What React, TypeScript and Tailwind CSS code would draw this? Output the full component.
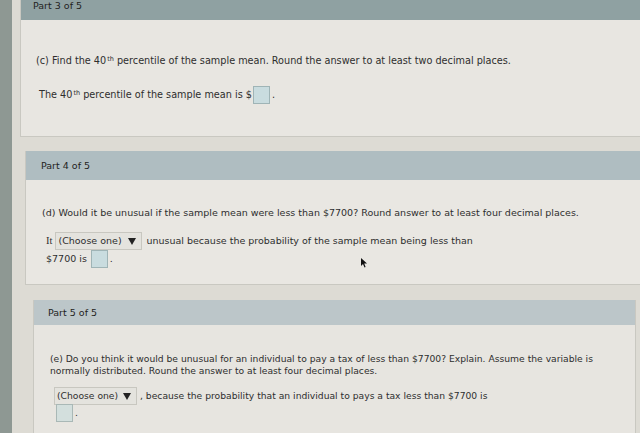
import React from 'react'

function AnswerBox({ className = '' }: { className?: string }) {
  return <span className={`inline-block h-[18px] w-[17px] border border-[#9fb4b6] bg-[#c9dcdf] align-middle ${className}`} />
}

function ChooseOne({ className = '' }: { className?: string }) {
  return (
    <span className={`inline-flex h-[18px] items-center justify-between border border-[#c8c7c0] bg-[#e4e3de] pl-[2px] pr-[5px] align-middle ${className}`}>
      <span>(Choose one)</span>
      <svg width="8" height="8" viewBox="0 0 8 8" className="shrink-0">
        <polygon points="0,1 8,1 4,8" fill="#222" />
      </svg>
    </span>
  )
}

function Th() {
  return <sup className="relative -top-[3px] ml-[1px] text-[6.5px]">th</sup>
}

export default function App() {
  return (
    <div className="relative flex h-[433px] w-[640px] overflow-hidden bg-[#dddbd4] font-['DejaVu_Sans','Liberation_Sans',sans-serif] leading-[12px] text-[#2e2e2e]">
      <div className="w-[12px] shrink-0 bg-[#8e9893]" />

      <div className="flex min-w-0 flex-1 flex-col">
        {/* Part 3 */}
        <div className="ml-[8px] flex flex-col border-l border-b border-[#c9c8c1]">
          <div className="flex h-[20px] items-start bg-[#8fa1a2] px-[12px] text-[9.5px] leading-[12px] text-[#1f2322]">Part 3 of 5</div>
          <div className="flex h-[116px] flex-col bg-[#e8e6e1] px-[15px] pt-[35px] text-[9.7px]">
            <p className="whitespace-nowrap">
              (c) Find the 40<Th /> percentile of the sample mean. Round the answer to at least two decimal places.
            </p>
            <p className="mt-[19px] flex h-[18px] items-center whitespace-nowrap pl-[3px]">
              <span>
                The 40<Th /> percentile of the sample mean is $
              </span>
              <AnswerBox className="ml-[1px]" />
              <span className="ml-[2px]">.</span>
            </p>
          </div>
        </div>

        {/* Part 4 */}
        <div className="ml-[13px] mt-[14px] flex flex-col border-l border-b border-[#c9c8c1]">
          <div className="flex h-[29px] items-center bg-[#afbdc1] px-[15px] text-[9.5px] text-[#1f2322]">Part 4 of 5</div>
          <div className="flex h-[104px] flex-col bg-[#e9e7e2] px-[16px] pt-[27px] text-[9.5px]">
            <p className="whitespace-nowrap">(d) Would it be unusual if the sample mean were less than $7700? Round answer to at least four decimal places.</p>
            <p className="mt-[13px] flex h-[18px] items-center whitespace-nowrap pl-[4px]">
              <span className="font-['Liberation_Serif',serif] text-[10.5px]">It</span>
              <ChooseOne className="ml-[3px] w-[87px]" />
              <span className="ml-[4px]">unusual because the probability of the sample mean being less than</span>
            </p>
            <p className="flex h-[18px] items-center whitespace-nowrap pl-[4px]">
              <span>$7700 is</span>
              <AnswerBox className="ml-[4px]" />
              <span className="ml-[2px]">.</span>
            </p>
          </div>
        </div>

        {/* Part 5 */}
        <div className="ml-[21px] mr-[4px] mt-[15px] flex flex-1 flex-col border-l border-r border-[#c9c8c1]">
          <div className="flex h-[25px] items-center bg-[#bcc6c9] px-[14px] text-[9.5px] text-[#1f2322]">Part 5 of 5</div>
          <div className="flex flex-1 flex-col bg-[#e7e5e0] px-[16px] pt-[28px] text-[9.2px]">
            <p className="whitespace-nowrap">
              (e) Do you think it would be unusual for an individual to pay a tax of less than $7700? Explain. Assume the variable is
              <br />
              normally distributed. Round the answer to at least four decimal places.
            </p>
            <p className="mt-[11px] flex h-[16px] items-center whitespace-nowrap pl-[4px]">
              <ChooseOne className="h-[16px] w-[83px]" />
              <span className="ml-[3px]">, because the probability that an individual to pays a tax less than $7700 is</span>
            </p>
            <p className="flex h-[18px] items-center pl-[6px]">
              <AnswerBox className="w-[16px] border-[#a9b8b6] bg-[#d3dfdd]" />
              <span className="ml-[2px]">.</span>
            </p>
          </div>
        </div>
      </div>

      {/* mouse cursor */}
      <svg className="absolute left-[361px] top-[258px]" width="7" height="10" viewBox="0 0 7 10">
        <polygon points="0,0 0,8 2,6 3.5,9.5 4.6,9 3.2,5.6 6,5.6" fill="#111" />
      </svg>
    </div>
  )
}
